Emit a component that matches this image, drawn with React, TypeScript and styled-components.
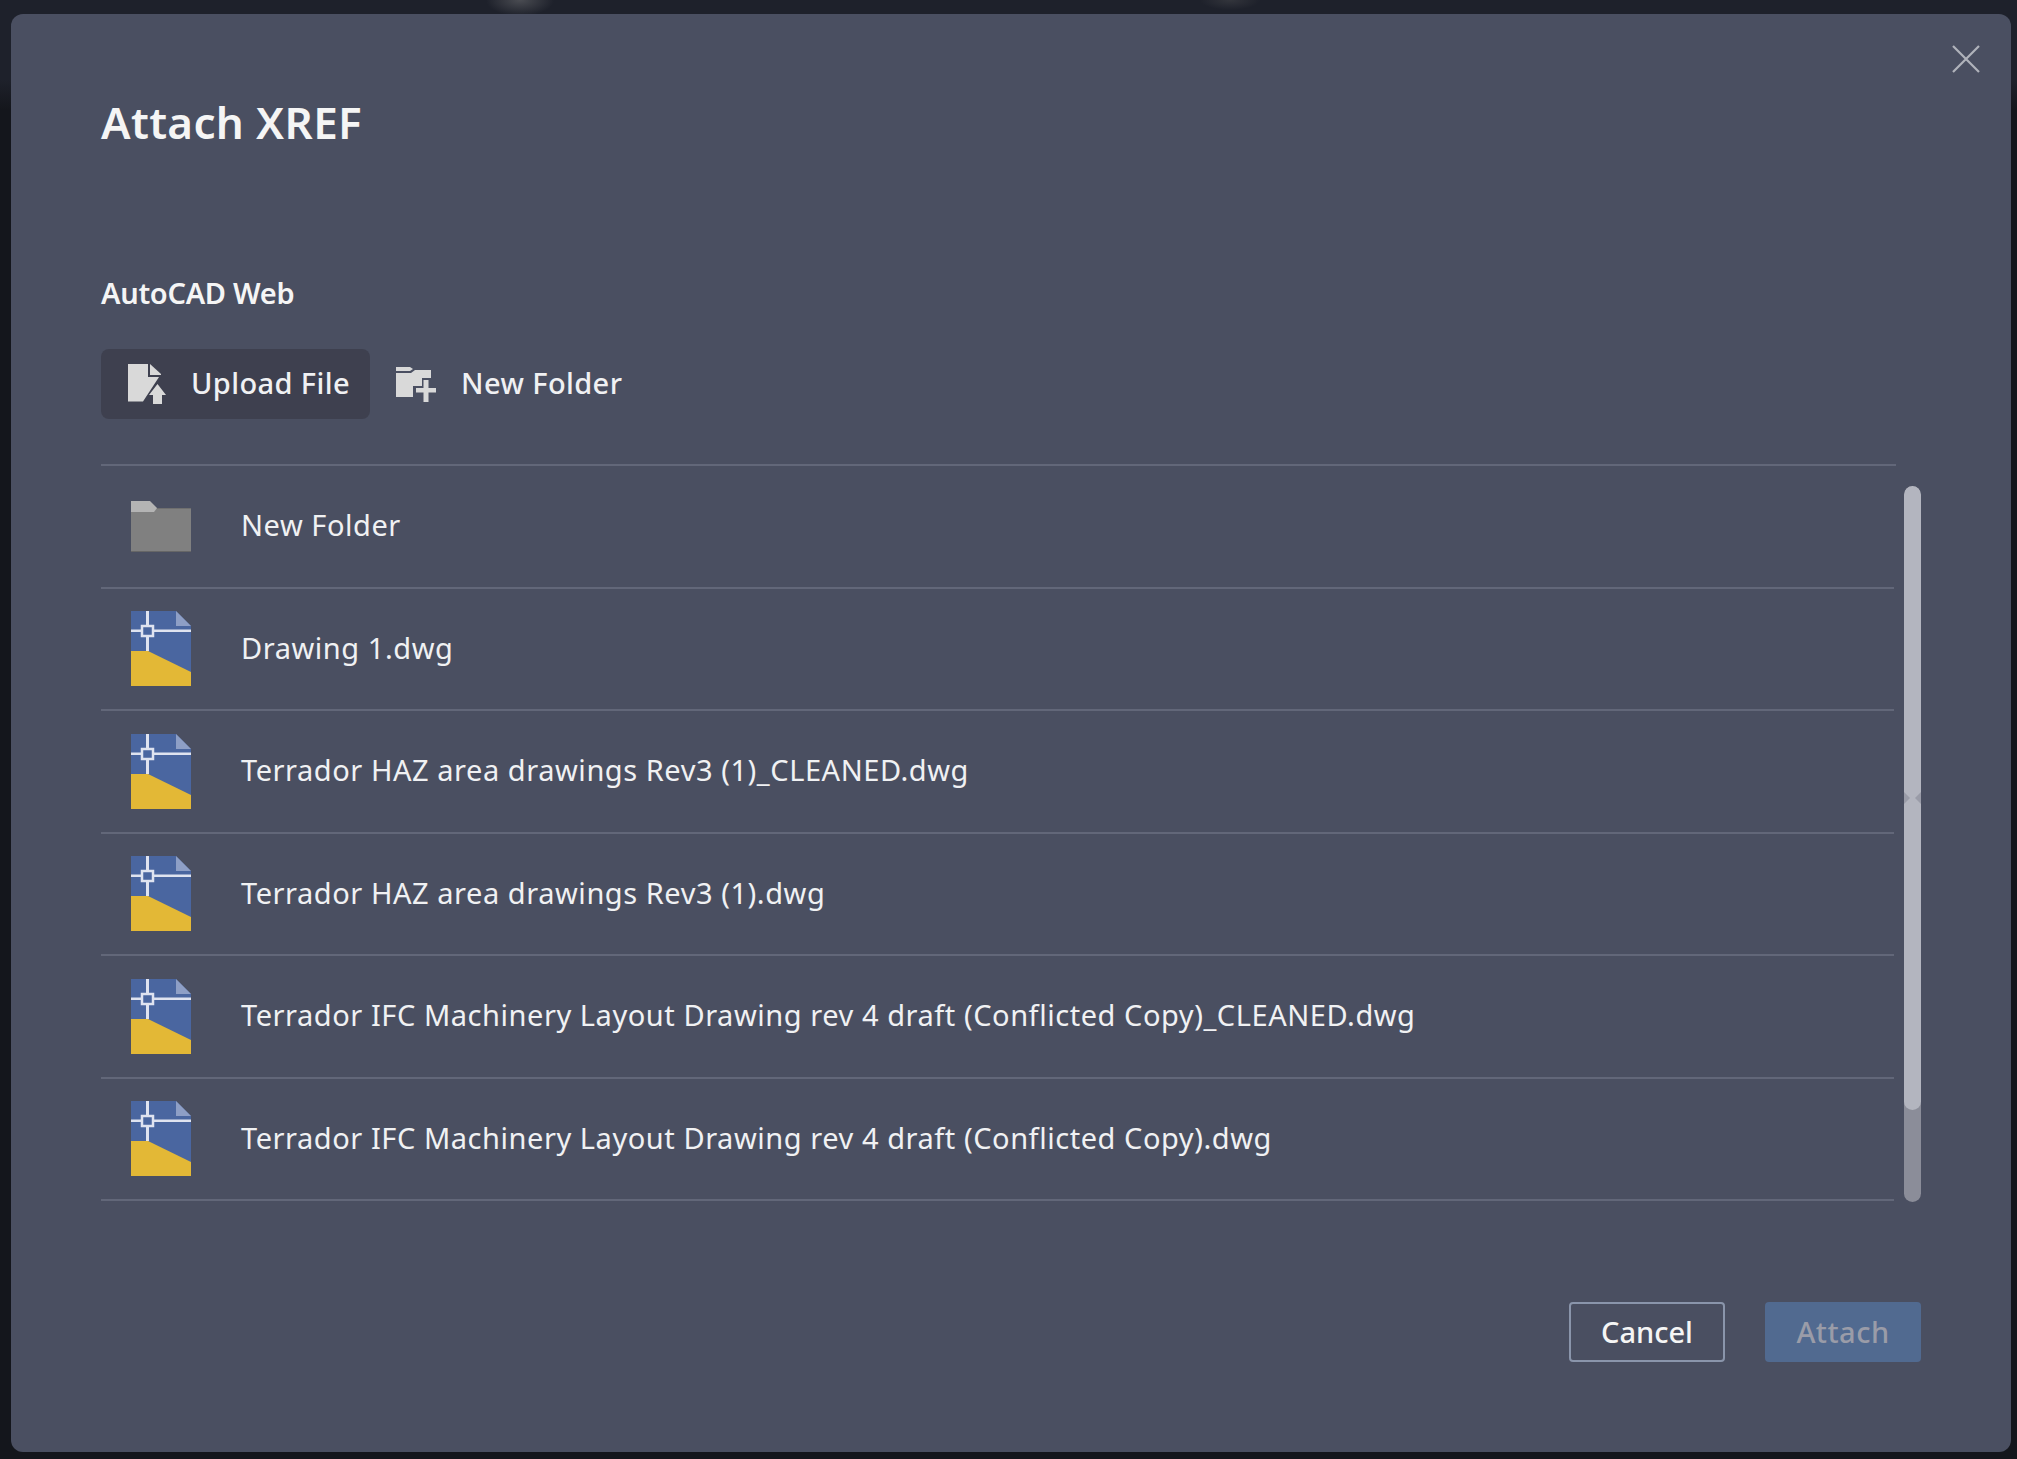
import styled, { createGlobalStyle } from 'styled-components';

const GlobalStyle = createGlobalStyle`
	html, body {
		margin: 0;
		height: 100%;
		overflow: hidden;
		background: #14161c;
		font-family: "Noto Sans", "Open Sans", sans-serif;
	}
`;

const files = [
	{ name: 'New Folder', kind: 'folder' },
	{ name: 'Drawing 1.dwg', kind: 'dwg' },
	{ name: 'Terrador HAZ area drawings Rev3 (1)_CLEANED.dwg', kind: 'dwg' },
	{ name: 'Terrador HAZ area drawings Rev3 (1).dwg', kind: 'dwg' },
	{
		name: 'Terrador IFC Machinery Layout Drawing rev 4 draft (Conflicted Copy)_CLEANED.dwg',
		kind: 'dwg',
	},
	{
		name: 'Terrador IFC Machinery Layout Drawing rev 4 draft (Conflicted Copy).dwg',
		kind: 'dwg',
	},
];

function UploadIcon() {
	return (
		<svg width="38" height="40" viewBox="0 0 38 40">
			<path d="M0 0H20V13H31L15 37.500H0Z" fill="#d9d9d9" />
			<path d="M22 0L33 10V11H22Z" fill="#d9d9d9" />
			<path d="M29.500 20L38 31H34V40H25V31H21Z" fill="#d9d9d9" />
		</svg>
	);
}

function NewFolderIcon() {
	return (
		<svg width="40" height="35" viewBox="0 0 40 35">
			<path d="M0 0H14L17 2L14 4H0Z" fill="#d9d9d9" />
			<path d="M0 6H15L19 3H35V11H26V19H17V30H0Z" fill="#d9d9d9" />
			<path d="M27.500 13H32.500V21H40V25.500H32.500V35H27.500V25.500H20V21H27.500Z" fill="#d9d9d9" />
		</svg>
	);
}

function FolderIcon() {
	return (
		<svg width="60" height="51" viewBox="0 0 60 51">
			<path d="M0 7H60V51H0Z" fill="#808080" />
			<path d="M26 7H60V8H26Z" fill="#6f6f6f" />
			<path d="M0 50H60V51H0Z" fill="#666" />
			<path d="M0 0H19L26 7L23 11H0Z" fill="#b4b4b4" />
		</svg>
	);
}

function DwgIcon() {
	return (
		<svg width="60" height="75" viewBox="0 0 60 75">
			<path d="M0 0H45L60 15V75H0Z" fill="#4a66a0" />
			<path d="M45 0L60 15H45Z" fill="#8e9fc6" />
			<path d="M15 0H18V40H15ZM0 18.500H60V21H0Z" fill="#dfe3f0" />
			<rect x="11" y="15" width="11" height="10" fill="#4a66a0" stroke="#dfe3f0" strokeWidth="2.500" />
			<path d="M0 40H17L60 61V75H0Z" fill="#e3b836" />
		</svg>
	);
}

export default function App() {
	return (
		<Page>
			<GlobalStyle />
			<Dialog>
				<CloseButton type="button" aria-label="Close">
					<svg width="28" height="28" viewBox="0 0 28 28">
						<path d="M1 1L27 27M27 1L1 27" stroke="#b0b3bb" strokeWidth="2.200" fill="none" />
					</svg>
				</CloseButton>
				<Title>Attach XREF</Title>
				<Section>AutoCAD Web</Section>
				<Toolbar>
					<ToolButton $active>
						<IconSlot>
							<UploadIcon />
						</IconSlot>
						<ToolLabel>Upload File</ToolLabel>
					</ToolButton>
					<ToolButton>
						<IconSlot>
							<NewFolderIcon />
						</IconSlot>
						<ToolLabel>New Folder</ToolLabel>
					</ToolButton>
				</Toolbar>
				<ListArea>
					<List>
						{files.map((file) => (
							<Row key={file.name}>
								<RowIcon>
									{file.kind === 'folder' ? <FolderIcon /> : <DwgIcon />}
								</RowIcon>
								<FileName>{file.name}</FileName>
							</Row>
						))}
					</List>
					<ScrollTrack>
						<ScrollThumb />
					</ScrollTrack>
				</ListArea>
				<Footer>
					<CancelButton type="button">Cancel</CancelButton>
					<AttachButton type="button" disabled>
						Attach
					</AttachButton>
				</Footer>
			</Dialog>
		</Page>
	);
}

const Page = styled.div`
	box-sizing: border-box;
	width: 2017px;
	height: 1459px;
	padding: 14px 6px 7px 11px;
	background:
		radial-gradient(ellipse 34px 16px at 520px 0, #4a4c52, transparent),
		radial-gradient(ellipse 30px 10px at 1230px 0, #33353c, transparent),
		linear-gradient(#1e212b 0, #1e212b 80px, #14161c 110px);
`;

const Dialog = styled.div`
	position: relative;
	box-sizing: border-box;
	height: 1438px;
	padding: 0 90px;
	border-radius: 12px;
	background: #4a4f61;
	color: #f3f4f6;
	display: flex;
	flex-direction: column;
`;

const CloseButton = styled.button`
	position: absolute;
	top: 31px;
	right: 31px;
	padding: 0;
	border: 0;
	background: none;
	display: flex;
`;

const Title = styled.h1`
	margin: 76px 0 0;
	font-size: 44px;
	line-height: 64px;
	font-weight: 600;
	letter-spacing: 0.350px;
	color: #f5f5f5;
`;

const Section = styled.h2`
	margin: 119px 0 0;
	font-size: 29px;
	line-height: 40px;
	font-weight: 600;
	letter-spacing: -0.300px;
	color: #f5f5f5;
`;

const Toolbar = styled.div`
	display: flex;
	gap: 1px;
	margin-top: 36px;
	height: 70px;
`;

const ToolButton = styled.div<{ $active?: boolean }>`
	display: flex;
	align-items: center;
	padding: 0 20px 0 0;
	border-radius: 8px;
	background: ${(p) => (p.$active ? '#3e404f' : 'transparent')};
`;

const ToolLabel = styled.span`
	padding-bottom: 3px;
	font-size: 29px;
	font-weight: 500;
	letter-spacing: 0.400px;
	color: #f0f1f3;
`;

const IconSlot = styled.span`
	display: flex;
	justify-content: flex-end;
	width: 65px;
	margin-right: 25px;
`;

const ListArea = styled.div`
	display: flex;
	align-items: flex-start;
	margin-top: 45px;
`;

const List = styled.div`
	width: 1795px;
	border-top: 2px solid #626779;
`;

const Row = styled.div`
	box-sizing: border-box;
	display: flex;
	align-items: center;
	height: 122.500px;
	width: 1793px;
	border-bottom: 2px solid #626779;
`;

const RowIcon = styled.span`
	display: flex;
	width: 60px;
	margin: 0 50px 0 30px;
`;

const FileName = styled.span`
	padding-bottom: 3px;
	font-size: 29px;
	letter-spacing: 0.550px;
	color: #f0f1f3;
`;

const ScrollTrack = styled.div`
	width: 17px;
	height: 716px;
	margin: 22px 0 0 8px;
	border-radius: 9px;
	background: #8b8d99;
	overflow: hidden;
`;

const ScrollThumb = styled.div`
	position: relative;
	height: 624px;
	border-radius: 9px;
	background: #b3b5bf;

	&::before,
	&::after {
		content: '';
		position: absolute;
		top: 306px;
		width: 6px;
		height: 12px;
		background: #9a9ca8;
	}

	&::before {
		left: 0;
		clip-path: polygon(0 0, 100% 50%, 0 100%);
	}

	&::after {
		right: 0;
		clip-path: polygon(100% 0, 0 50%, 100% 100%);
	}
`;

const Footer = styled.div`
	display: flex;
	justify-content: flex-end;
	gap: 40px;
	margin-top: 100px;
`;

const CancelButton = styled.button`
	box-sizing: border-box;
	width: 156px;
	height: 60px;
	padding: 0 0 2px;
	border: 2px solid #8a95ab;
	border-radius: 4px;
	background: transparent;
	color: #f5f5f5;
	font: 500 29px "Noto Sans", sans-serif;
`;

const AttachButton = styled.button`
	box-sizing: border-box;
	width: 156px;
	height: 60px;
	padding: 0 0 2px;
	border: 0;
	border-radius: 4px;
	background: #516a90;
	color: #9a9ca8;
	font: 500 29px "Noto Sans", sans-serif;
	letter-spacing: 0.500px;
`;
